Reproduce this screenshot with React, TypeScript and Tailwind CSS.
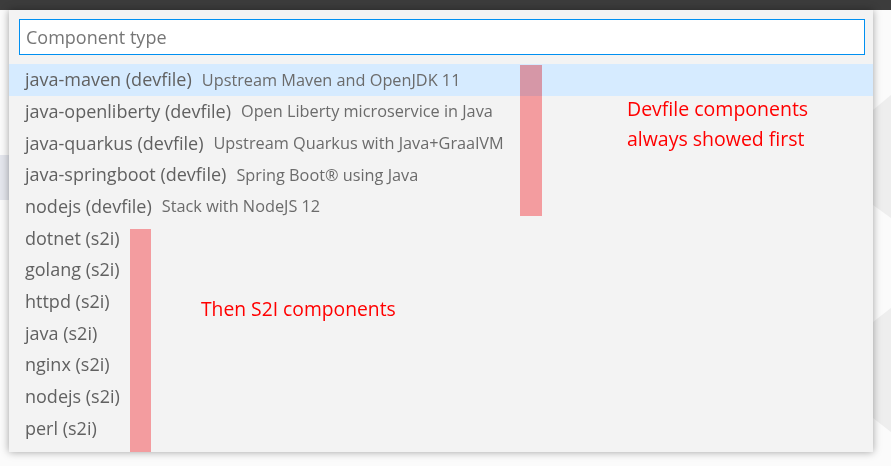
import React from "react";

const devfile = [
  { label: "java-maven (devfile)", desc: "Upstream Maven and OpenJDK 11" },
  { label: "java-openliberty (devfile)", desc: "Open Liberty microservice in Java" },
  { label: "java-quarkus (devfile)", desc: "Upstream Quarkus with Java+GraalVM" },
  { label: "java-springboot (devfile)", desc: "Spring Boot® using Java" },
  { label: "nodejs (devfile)", desc: "Stack with NodeJS 12" },
];
const s2i = ["dotnet (s2i)", "golang (s2i)", "httpd (s2i)", "java (s2i)", "nginx (s2i)", "nodejs (s2i)", "perl (s2i)"];

export default function App() {
  const font = { fontFamily: '"Open Sans", "Noto Sans", sans-serif' };
  return (
    <div className="relative w-[891px] h-[466px] bg-[#fbfbfb] overflow-hidden" style={font}>
      <svg className="absolute left-0 top-0" width="891" height="466">
        <rect x="0" y="155" width="12" height="45" fill="#e4e6ed" />
        <polygon points="891,95 873,110 873,205 891,218" fill="#eeeeee" />
        <polygon points="891,308 873,322 873,418 891,432" fill="#eeeeee" />
      </svg>
      <div className="relative h-[10px] bg-[#3c3c3c]" />
      <div className="relative ml-[9px] w-[864px] h-[442px] bg-[#f3f3f3] shadow-[0_0_8px_rgba(0,0,0,0.36)]">
        <div className="pt-[9px] pl-[10px] pr-[8px]">
          <div className="h-[36px] border border-[#0090f1] bg-white flex items-center px-[6px]">
            <span className="text-[18px] text-[#767676]">Component type</span>
          </div>
        </div>
        <div className="mt-[9px] flex flex-col">
          {devfile.map((r, i) => (
            <div
              key={r.label}
              className={`h-[31.67px] flex items-center pl-[16px] whitespace-nowrap ${i === 0 ? "bg-[#d6ebff]" : ""}`}
            >
              <span className="text-[18px] text-[#616161]">{r.label}</span>
              <span className="ml-[10px] text-[16.3px] text-[#6b6b6b]">{r.desc}</span>
            </div>
          ))}
          {s2i.map((l) => (
            <div key={l} className="h-[31.67px] flex items-center pl-[16px] whitespace-nowrap">
              <span className="text-[18px] text-[#616161]">{l}</span>
            </div>
          ))}
        </div>
        <div className="absolute left-[511px] top-[55px] w-[22px] h-[151px] bg-[#ffa4a7] mix-blend-multiply" />
        <div className="absolute left-[121px] top-[219px] w-[21px] h-[223px] bg-[#ffa4a7] mix-blend-multiply" />
        <div className="absolute left-[618px] top-[84px] text-[19.5px] leading-[30px] text-[#ff0000]">
          <div>Devfile components</div>
          <div>always showed first</div>
        </div>
        <div className="absolute left-[192px] top-[284px] text-[19.3px] leading-[30px] text-[#ff0000]">Then S2I components</div>
      </div>
    </div>
  );
}
